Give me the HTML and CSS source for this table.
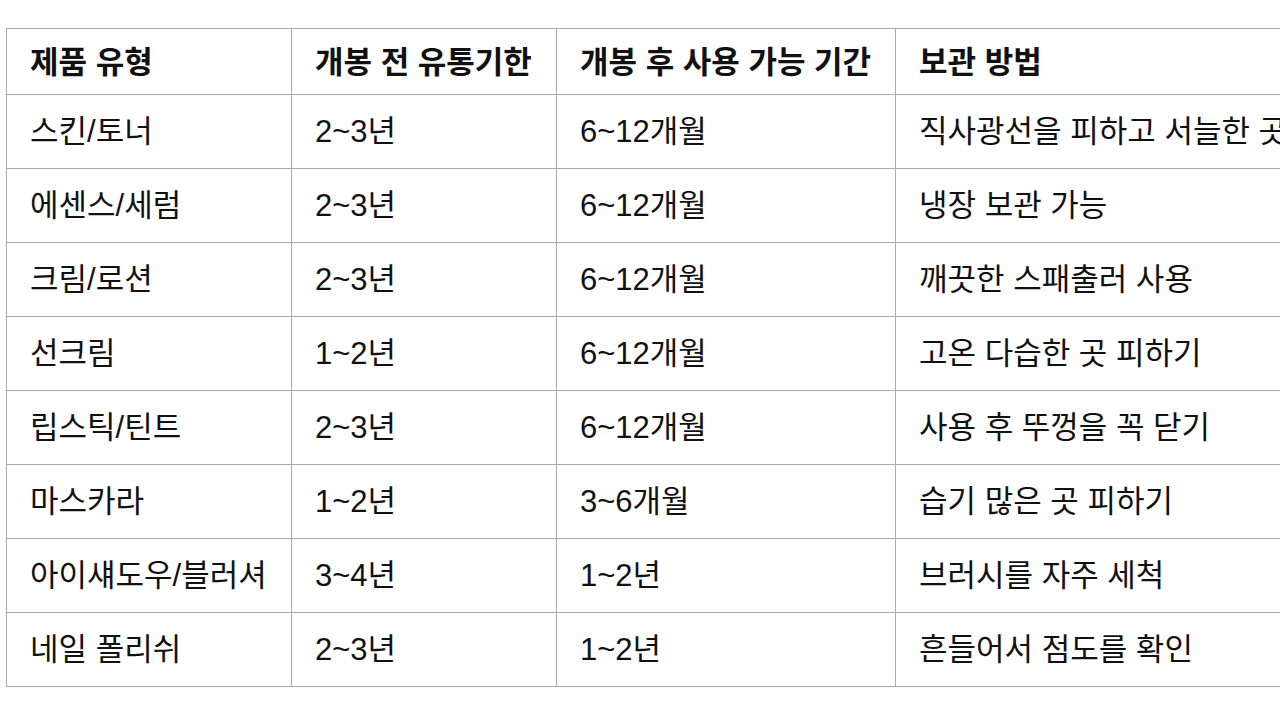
FILE: index.html
```html
<!DOCTYPE html>
<html lang="ko">
<head>
<meta charset="utf-8">
<link rel="stylesheet" href="styles.css">
</head>
<body>
<table class="tbl">
  <colgroup>
    <col class="c1"><col class="c2"><col class="c3"><col class="c4">
  </colgroup>
  <thead>
    <tr><th>제품 유형</th><th>개봉 전 유통기한</th><th>개봉 후 사용 가능 기간</th><th>보관 방법</th></tr>
  </thead>
  <tbody>
    <tr><td>스킨/토너</td><td>2~3년</td><td>6~12개월</td><td>직사광선을 피하고 서늘한 곳에 보관</td></tr>
    <tr><td>에센스/세럼</td><td>2~3년</td><td>6~12개월</td><td>냉장 보관 가능</td></tr>
    <tr><td>크림/로션</td><td>2~3년</td><td>6~12개월</td><td>깨끗한 스패출러 사용</td></tr>
    <tr><td>선크림</td><td>1~2년</td><td>6~12개월</td><td>고온 다습한 곳 피하기</td></tr>
    <tr><td>립스틱/틴트</td><td>2~3년</td><td>6~12개월</td><td>사용 후 뚜껑을 꼭 닫기</td></tr>
    <tr><td>마스카라</td><td>1~2년</td><td>3~6개월</td><td>습기 많은 곳 피하기</td></tr>
    <tr><td>아이섀도우/블러셔</td><td>3~4년</td><td>1~2년</td><td>브러시를 자주 세척</td></tr>
    <tr><td>네일 폴리쉬</td><td>2~3년</td><td>1~2년</td><td>흔들어서 점도를 확인</td></tr>
  </tbody>
</table>
</body>
</html>
```
FILE: styles.css
```css
html, body {
  margin: 0;
  padding: 0;
  background: #fff;
  overflow: hidden;
}
body {
  font-family: "Liberation Sans", "Noto Sans CJK KR", sans-serif;
  color: #111;
}
.tbl {
  margin: 28px 0 0 6px;
  border-collapse: collapse;
  table-layout: fixed;
  width: 1489px;
}
.c1 { width: 285px; }
.c2 { width: 265px; }
.c3 { width: 339px; }
.c4 { width: 600px; }
.tbl th, .tbl td {
  border: 1px solid #ababab;
  font-size: 31px;
  line-height: 40px;
  text-align: left;
  white-space: nowrap;
  padding: 17px 24px 16px 23px;
}
.tbl th {
  font-weight: 700;
  padding-top: 14px;
  padding-bottom: 11px;
}
```
